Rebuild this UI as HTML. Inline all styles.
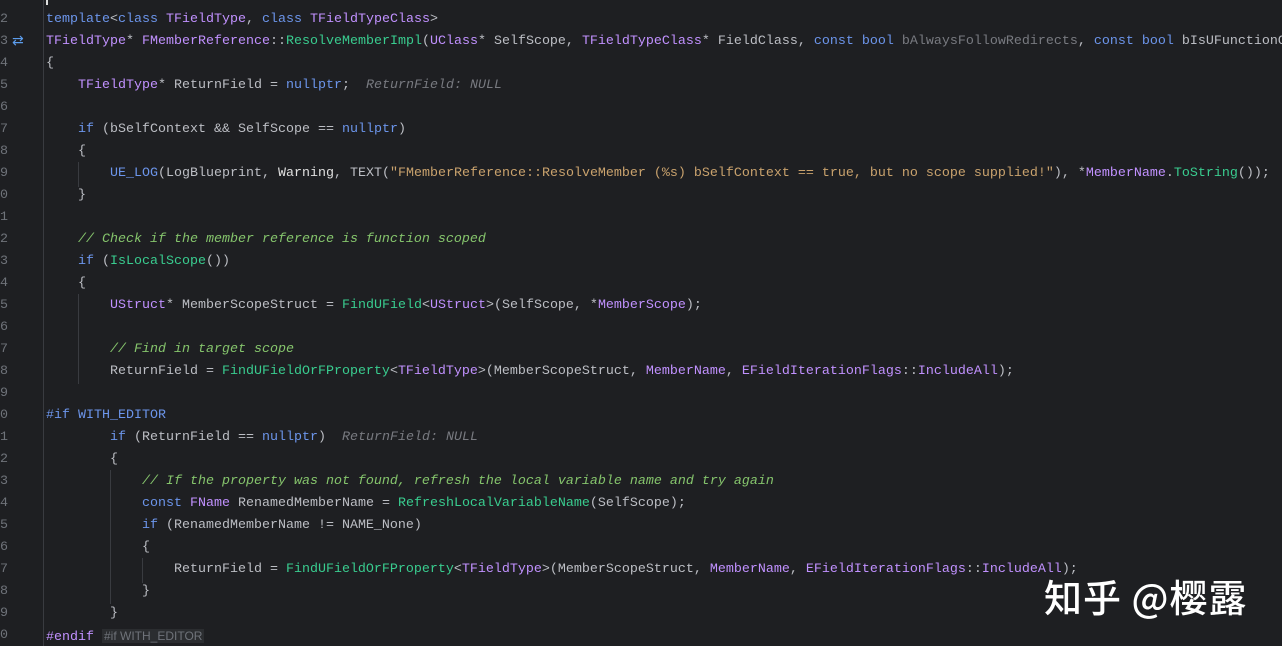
<!DOCTYPE html>
<html><head><meta charset="utf-8"><style>
html,body{margin:0;padding:0;background:#1e1f22;width:1282px;height:646px;overflow:hidden;position:relative}
.g{position:absolute;left:43px;top:0;width:1px;height:646px;background:#393b40}
.ig{position:absolute;width:1px;background:#393b40}
pre{position:absolute;left:46px;top:-13px;width:1236px;overflow:hidden;margin:0;font-family:"Liberation Mono",monospace;font-size:13.33px;line-height:22px;color:#bcbec4;white-space:pre}
.n{position:absolute;left:0;top:-13px;width:20px;margin:0;font-family:"Liberation Mono",monospace;font-size:13.33px;line-height:22px;color:#6f737a;white-space:pre}
.k{color:#6c95eb}.t{color:#c191ff}.f{color:#39cc8f}.c{color:#85c46c;font-style:italic}.s{color:#c9a26d}.h{color:#787a80;font-style:italic}.m{color:#c191ff}
.wm{position:absolute;left:1044px;top:568px;font-family:"Noto Sans CJK SC",sans-serif;font-size:38px;color:#fff;font-weight:500;letter-spacing:1px}
.tag{color:#6f737a;background:#2b2d30;font-family:"Liberation Sans",sans-serif;font-size:12px;padding:0 2px}
.cur{position:absolute;left:46px;top:0;width:2px;height:5px;background:#ddd}
</style></head><body>
<div class="g"></div>
<div class="cur"></div>
<div class="ig" style="left:78px;top:162px;height:25px"></div>
<div class="ig" style="left:78px;top:294px;height:90px"></div>
<div class="ig" style="left:110px;top:470px;height:134px"></div>
<div class="ig" style="left:142px;top:558px;height:25px"></div>
<pre class="n">
1
2
3
4
5
6
7
8
9
0
1
2
3
4
5
6
7
8
9
0
1
2
3
4
5
6
7
8
9
0</pre>
<div style="position:absolute;left:12px;top:33px;color:#5c9ded;font-size:14px;font-family:'DejaVu Sans',sans-serif">⇄</div>
<pre>

<span class="k">template</span>&lt;<span class="k">class</span> <span class="t">TFieldType</span>, <span class="k">class</span> <span class="t">TFieldTypeClass</span>&gt;
<span class="t">TFieldType</span>* <span class="t">FMemberReference</span>::<span class="f">ResolveMemberImpl</span>(<span class="t">UClass</span>* SelfScope, <span class="t">TFieldTypeClass</span>* FieldClass, <span class="k">const bool</span> <span class="h" style="font-style:normal">bAlwaysFollowRedirects</span>, <span class="k">const bool</span> bIsUFunctionOrMulticastDelegate)
{
    <span class="t">TFieldType</span>* ReturnField = <span class="k">nullptr</span>;  <span class="h">ReturnField: NULL</span>

    <span class="k">if</span> (bSelfContext &amp;&amp; SelfScope == <span class="k">nullptr</span>)
    {
        <span class="k">UE_LOG</span>(LogBlueprint, <span style="color:#e0e0e0">Warning</span>, TEXT(<span class="s">"FMemberReference::ResolveMember (%s) bSelfContext == true, but no scope supplied!"</span>), *<span class="m">MemberName</span>.<span class="f">ToString</span>());
    }

    <span class="c">// Check if the member reference is function scoped</span>
    <span class="k">if</span> (<span class="f">IsLocalScope</span>())
    {
        <span class="t">UStruct</span>* MemberScopeStruct = <span class="f">FindUField</span>&lt;<span class="t">UStruct</span>&gt;(SelfScope, *<span class="m">MemberScope</span>);

        <span class="c">// Find in target scope</span>
        ReturnField = <span class="f">FindUFieldOrFProperty</span>&lt;<span class="t">TFieldType</span>&gt;(MemberScopeStruct, <span class="m">MemberName</span>, <span class="t">EFieldIterationFlags</span>::<span class="m">IncludeAll</span>);

<span class="k">#if WITH_EDITOR</span>
        <span class="k">if</span> (ReturnField == <span class="k">nullptr</span>)  <span class="h">ReturnField: NULL</span>
        {
            <span class="c">// If the property was not found, refresh the local variable name and try again</span>
            <span class="k">const</span> <span class="t">FName</span> RenamedMemberName = <span class="f">RefreshLocalVariableName</span>(SelfScope);
            <span class="k">if</span> (RenamedMemberName != NAME_None)
            {
                ReturnField = <span class="f">FindUFieldOrFProperty</span>&lt;<span class="t">TFieldType</span>&gt;(MemberScopeStruct, <span class="m">MemberName</span>, <span class="t">EFieldIterationFlags</span>::<span class="m">IncludeAll</span>);
            }
        }
<span class="t">#endif</span> <span class="tag">#if WITH_EDITOR</span></pre>
<div class="wm">知乎 @樱露</div>
</body></html>
